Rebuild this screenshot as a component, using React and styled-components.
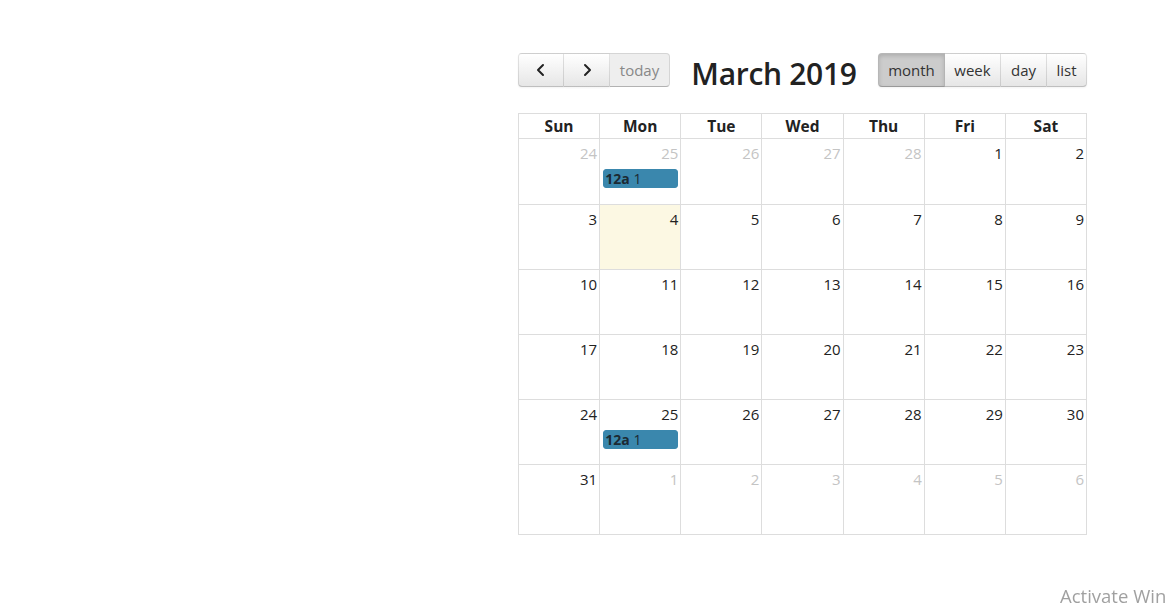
import React from "react";
import styled, { createGlobalStyle, css } from "styled-components";

const GlobalStyle = createGlobalStyle`
  html, body {
    margin: 0;
    padding: 0;
    background: #fff;
    font-family: "Open Sans", "Noto Sans", "Liberation Sans", sans-serif;
    color: #333;
  }
`;

const Page = styled.div`
  display: flex;
  justify-content: flex-end;
  padding: 53px 84px 0 0;
  height: 562px;
  overflow: hidden;
`;

const Calendar = styled.div`
  width: 569px;
`;

const Toolbar = styled.div`
  display: flex;
  align-items: center;
  justify-content: space-between;
  height: 34px;
  margin-bottom: 26px;
`;

const ButtonGroup = styled.div`
  display: flex;
`;

const Button = styled.button`
  height: 34px;
  width: ${(p) => p.$w}px;
  padding: 0;
  font-family: inherit;
  font-size: 15px;
  color: #333;
  background: linear-gradient(#fff, #e6e6e6);
  border: 1px solid rgba(0, 0, 0, 0.1);
  border-bottom-color: rgba(0, 0, 0, 0.25);
  border-left-width: 0;
  box-shadow: inset 0 1px 0 rgba(255, 255, 255, 0.2), 0 1px 2px rgba(0, 0, 0, 0.05);
  display: flex;
  align-items: center;
  justify-content: center;
  cursor: pointer;

  &:first-child {
    border-left-width: 1px;
    border-radius: 4px 0 0 4px;
  }
  &:last-child {
    border-radius: 0 4px 4px 0;
  }

  ${(p) =>
    p.$active &&
    css`
      background: #ccc;
      box-shadow: inset 0 2px 4px rgba(0, 0, 0, 0.15), 0 1px 2px rgba(0, 0, 0, 0.05);
    `}

  ${(p) =>
    p.$disabled &&
    css`
      color: #888;
      background: #eee;
      box-shadow: none;
    `}
`;

const Title = styled.h2`
  margin: 7px 0 0 0;
  font-size: 30px;
  font-weight: 600;
  color: #222;
  letter-spacing: -0.3px;
  line-height: 40px;
`;

const Grid = styled.div`
  display: grid;
  grid-template-columns: repeat(7, 1fr);
  grid-template-rows: 25px 66px 65px 65px 65px 65px 70px;
  border-top: 1px solid #ddd;
  border-left: 1px solid #ddd;
`;

const HeadCell = styled.div`
  border-right: 1px solid #ddd;
  border-bottom: 1px solid #ddd;
  font-size: 15.5px;
  font-weight: 700;
  color: #222;
  text-align: center;
  line-height: 24px;
`;

const DayCell = styled.div`
  border-right: 1px solid #ddd;
  border-bottom: 1px solid #ddd;
  background: ${(p) => (p.$today ? "#fcf8e3" : "#fff")};
  display: flex;
  flex-direction: column;
  align-items: stretch;
  padding: 4px 2px 0 2px;
  box-sizing: border-box;
  min-width: 0;
`;

const DayNum = styled.div`
  text-align: right;
  font-size: 15px;
  line-height: 20px;
  color: ${(p) => (p.$other ? "#c4c4c4" : "#222")};
`;

const Event = styled.div`
  margin: 6px 0 0 1px;
  height: 19px;
  background: #3a87ad;
  border: 1px solid #3a87ad;
  border-radius: 3px;
  box-sizing: border-box;
  font-size: 14px;
  line-height: 17px;
  color: #1c2a33;
  padding: 0 1px;
  white-space: nowrap;
  overflow: hidden;

  b {
    font-weight: 700;
    margin-right: 4px;
  }
`;

const Watermark = styled.div`
  position: fixed;
  left: 1060px;
  top: 584px;
  font-family: "Open Sans", "Noto Sans", sans-serif;
  font-size: 18.5px;
  color: rgba(120, 120, 120, 0.7);
  white-space: nowrap;
  line-height: 24px;

  span {
    display: block;
    font-size: 13px;
  }
`;

const Chevron = ({ dir }) => (
  <svg width="14" height="14" viewBox="0 0 14 14" fill="none">
    <path
      d={dir === "left" ? "M9 2 L4 7 L9 12" : "M5 2 L10 7 L5 12"}
      stroke="#222"
      strokeWidth="2"
      strokeLinecap="round"
      strokeLinejoin="round"
    />
  </svg>
);

const headers = ["Sun", "Mon", "Tue", "Wed", "Thu", "Fri", "Sat"];

const buildDays = () => {
  const days = [];
  [24, 25, 26, 27, 28].forEach((d) => days.push({ d, other: true }));
  for (let d = 1; d <= 31; d++) days.push({ d });
  [1, 2, 3, 4, 5, 6].forEach((d) => days.push({ d, other: true }));
  return days;
};

const App = () => {
  const days = buildDays();
  return (
    <Page>
      <GlobalStyle />
      <Calendar>
        <Toolbar>
          <ButtonGroup>
            <Button $w={46}>
              <Chevron dir="left" />
            </Button>
            <Button $w={46}>
              <Chevron dir="right" />
            </Button>
            <Button $w={60} $disabled>
              today
            </Button>
          </ButtonGroup>
          <Title>March 2019</Title>
          <ButtonGroup>
            <Button $w={67} $active>
              month
            </Button>
            <Button $w={56}>week</Button>
            <Button $w={46}>day</Button>
            <Button $w={40}>list</Button>
          </ButtonGroup>
        </Toolbar>
        <Grid>
          {headers.map((h) => (
            <HeadCell key={h}>{h}</HeadCell>
          ))}
          {days.map((day, i) => (
            <DayCell key={i} $today={!day.other && day.d === 4}>
              <DayNum $other={day.other}>{day.d}</DayNum>
              {(i === 1 || i === 29) && (
                <Event>
                  <b>12a</b>1
                </Event>
              )}
            </DayCell>
          ))}
        </Grid>
      </Calendar>
      <Watermark>
        Activate Win
        <span>Go to Settings</span>
      </Watermark>
    </Page>
  );
};

export default App;
